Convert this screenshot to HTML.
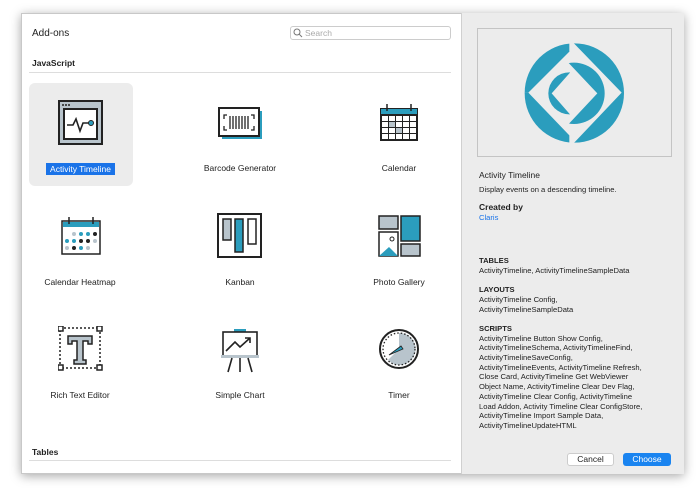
<!DOCTYPE html>
<html><head><style>
*{margin:0;padding:0;box-sizing:border-box}
body{width:697px;height:494px;background:#fff;font-family:"Liberation Sans",sans-serif;position:relative;overflow:hidden;color:#222}
.win{position:absolute;left:21px;top:13px;width:663px;height:461px;background:#fff;box-shadow:0 2px 10px rgba(0,0,0,.35);border:1px solid #c8c8c8}
.right{position:absolute;left:461px;top:13px;width:223px;height:461px;background:#ececec;border-left:1px solid #d0d0d0}
.a{position:absolute;white-space:nowrap}
.lbl{position:absolute;font-size:8.5px;width:140px;text-align:center;color:#222}
.ic{position:absolute}
.sm{font-size:7.6px;line-height:9.7px;color:#222}
</style></head><body>
<div class="win"></div>
<div class="right"></div>
<div class="a" style="left:32px;top:28px;font-size:10px;">Add-ons</div>
<div class="a" style="left:290px;top:26px;width:161px;height:14px;border:1px solid #ccc;border-radius:3px;background:#fff"></div>
<svg class="ic" style="left:293px;top:28px" width="10" height="10"><circle cx="4" cy="4" r="3" fill="none" stroke="#777" stroke-width="1"/><line x1="6" y1="6" x2="9" y2="9" stroke="#777"/></svg>
<div class="a" style="left:305px;top:28px;font-size:8.5px;color:#aaa">Search</div>
<div class="a" style="left:32px;top:58px;font-size:8.5px;font-weight:bold">JavaScript</div>
<div class="a" style="left:29px;top:72px;width:422px;height:1px;background:#ddd"></div>
<div class="a" style="left:29px;top:83px;width:104px;height:103px;background:#ececec;border-radius:6px"></div>
<div class="a" style="left:46px;top:163px;width:69px;height:12px;background:#1a73e8;color:#fff;font-size:8.5px;text-align:center;line-height:12px">Activity Timeline</div>
<div class="lbl" style="left:170px;top:163px">Barcode Generator</div>
<div class="lbl" style="left:329px;top:163px">Calendar</div>
<div class="lbl" style="left:10px;top:277px">Calendar Heatmap</div>
<div class="lbl" style="left:170px;top:277px">Kanban</div>
<div class="lbl" style="left:329px;top:277px">Photo Gallery</div>
<div class="lbl" style="left:10px;top:390px">Rich Text Editor</div>
<div class="lbl" style="left:170px;top:390px">Simple Chart</div>
<div class="lbl" style="left:329px;top:390px">Timer</div>
<div class="a" style="left:32px;top:447px;font-size:8.5px;font-weight:bold">Tables</div>
<div class="a" style="left:29px;top:460px;width:422px;height:1px;background:#ddd"></div>

<!-- icons -->
<svg class="ic" style="left:58px;top:100px" width="46" height="46"><rect x="1" y="1" width="43" height="43" fill="#b8c4cc" stroke="#222" stroke-width="2"/><rect x="6" y="9" width="33" height="30" fill="#fff" stroke="#222" stroke-width="2"/><circle cx="5" cy="5" r="1" fill="#222"/><circle cx="8" cy="5" r="1" fill="#222"/><circle cx="11" cy="5" r="1" fill="#222"/><path d="M9 25h6l3-6 4 12 3-8h6" fill="none" stroke="#222" stroke-width="1.6"/><circle cx="33" cy="23" r="2.5" fill="#2b9dbd" stroke="#222"/></svg>
<svg class="ic" style="left:218px;top:107px" width="46" height="34"><rect x="4" y="4" width="40" height="28" fill="#2b9dbd"/><rect x="1" y="1" width="40" height="28" fill="#fff" stroke="#222" stroke-width="2"/><path d="M9 8h-3v4M9 23h-3v-4M33 8h3v4M33 23h3v-4" fill="none" stroke="#222" stroke-width="1.3"/><path d="M12 9v13M15 9v13M18 9v13M21 9v13M24 9v13M27 9v13M30 9v13" stroke="#222" stroke-width="1.3"/></svg>
<svg class="ic" style="left:379px;top:102px" width="40" height="40"><rect x="1" y="6" width="38" height="33" fill="#222"/><rect x="2" y="7" width="36" height="5" fill="#2b9dbd"/><path d="M8 2v7M32 2v7" stroke="#222" stroke-width="1.5"/><g fill="#fff"><rect x="3" y="14" width="6" height="5"/><rect x="10" y="14" width="6" height="5"/><rect x="17" y="14" width="6" height="5"/><rect x="24" y="14" width="6" height="5"/><rect x="31" y="14" width="6" height="5"/><rect x="3" y="20" width="6" height="5"/><rect x="10" y="20" width="6" height="5" fill="#b8c4cc"/><rect x="17" y="20" width="6" height="5"/><rect x="24" y="20" width="6" height="5"/><rect x="31" y="20" width="6" height="5"/><rect x="3" y="26" width="6" height="5"/><rect x="10" y="26" width="6" height="5"/><rect x="17" y="26" width="6" height="5" fill="#b8c4cc"/><rect x="24" y="26" width="6" height="5"/><rect x="31" y="26" width="6" height="5"/><rect x="3" y="32" width="6" height="5"/><rect x="10" y="32" width="6" height="5"/><rect x="17" y="32" width="6" height="5"/><rect x="24" y="32" width="6" height="5"/><rect x="31" y="32" width="6" height="5"/></g></svg>
<svg class="ic" style="left:61px;top:216px" width="40" height="40"><rect x="1" y="5" width="38" height="33" fill="#fff" stroke="#222" stroke-width="1.5"/><rect x="2" y="6" width="36" height="5" fill="#2b9dbd"/><path d="M8 1v7M32 1v7" stroke="#222" stroke-width="1.5"/><g><circle cx="13" cy="18" r="2" fill="#b8c4cc"/><circle cx="20" cy="18" r="2" fill="#2b9dbd"/><circle cx="27" cy="18" r="2" fill="#2b9dbd"/><circle cx="34" cy="18" r="2" fill="#222"/><circle cx="6" cy="25" r="2" fill="#2b9dbd"/><circle cx="13" cy="25" r="2" fill="#2b9dbd"/><circle cx="20" cy="25" r="2" fill="#222"/><circle cx="27" cy="25" r="2" fill="#222"/><circle cx="34" cy="25" r="2" fill="#b8c4cc"/><circle cx="6" cy="32" r="2" fill="#b8c4cc"/><circle cx="13" cy="32" r="2" fill="#222"/><circle cx="20" cy="32" r="2" fill="#2b9dbd"/><circle cx="27" cy="32" r="2" fill="#b8c4cc"/></g></svg>
<svg class="ic" style="left:217px;top:213px" width="46" height="46"><rect x="1" y="1" width="43" height="43" fill="#fff" stroke="#222" stroke-width="2"/><rect x="6" y="6" width="8" height="21" fill="#b8c4cc" stroke="#222" stroke-width="1.5"/><rect x="18" y="6" width="8" height="33" fill="#2b9dbd" stroke="#222" stroke-width="1.5"/><rect x="31" y="6" width="8" height="25" fill="#fff" stroke="#222" stroke-width="1.5"/></svg>
<svg class="ic" style="left:378px;top:214px" width="44" height="44"><rect x="1" y="2" width="19" height="13" fill="#b8c4cc" stroke="#222" stroke-width="1.5"/><rect x="23" y="2" width="19" height="25" fill="#2b9dbd" stroke="#222" stroke-width="1.5"/><rect x="1" y="18" width="19" height="24" fill="#fff" stroke="#222" stroke-width="1.5"/><path d="M1 42l10-9 9 9z" fill="#2b9dbd"/><circle cx="14" cy="25" r="2" fill="none" stroke="#222"/><rect x="23" y="30" width="19" height="12" fill="#b8c4cc" stroke="#222" stroke-width="1.5"/></svg>
<svg class="ic" style="left:58px;top:326px" width="46" height="46"><rect x="2" y="2" width="40" height="40" fill="none" stroke="#222" stroke-width="1.5" stroke-dasharray="2 2"/><g fill="#fff" stroke="#222" stroke-width="1.5"><rect x="0" y="0" width="5" height="5"/><rect x="39" y="0" width="5" height="5"/><rect x="0" y="39" width="5" height="5"/><rect x="39" y="39" width="5" height="5"/></g><path d="M10 10h24v8h-4v-3h-5v19h3v4h-12v-4h3v-19h-5v3h-4z" fill="#b8c4cc" stroke="#222" stroke-width="1.5"/></svg>
<svg class="ic" style="left:221px;top:327px" width="38" height="46"><rect x="13" y="2" width="12" height="6" fill="#2b9dbd"/><rect x="2" y="5" width="34" height="25" fill="#fff" stroke="#222" stroke-width="1.6"/><rect x="0" y="28" width="38" height="3" fill="#b8c4cc"/><path d="M5 24l9-9 5 5 10-9M24 11h5v5" fill="none" stroke="#222" stroke-width="1.6"/><path d="M11 31l-4 14M19 31v14M27 31l4 14" stroke="#222" stroke-width="1.6"/></svg>
<svg class="ic" style="left:378px;top:328px" width="42" height="42"><circle cx="21" cy="21" r="19" fill="#fff" stroke="#222" stroke-width="2"/><path d="M21 5a16 16 0 1 1 -11 27L21 21z" fill="#b8c4cc"/><circle cx="21" cy="21" r="16" fill="none" stroke="#222" stroke-width="1.3" stroke-dasharray="1.5 2"/><path d="M11 27l12-9 2 3z" fill="#2b9dbd" stroke="#222" stroke-width=".8"/></svg>

<!-- right -->
<div class="a" style="left:477px;top:28px;width:195px;height:129px;border:1px solid #c4c4c4;background:#ececec"></div>
<svg class="ic" style="left:520px;top:36px" width="110" height="114" viewBox="0 0 330 342">
<defs>
<clipPath id="c1"><circle cx="163" cy="171" r="149"/></clipPath>
<clipPath id="c2"><circle cx="162" cy="172" r="92"/></clipPath>
<clipPath id="c3"><circle cx="148" cy="172" r="63"/></clipPath>
</defs>
<g fill="#2b9dbd">
<g clip-path="url(#c1)">
<polygon points="25,170 148,47 148,0 0,0 0,170"/>
<polygon points="25,170 148,298 148,342 0,342 0,170"/>
<polygon points="155,0 155,15 305,170 155,328 155,342 330,342 330,0"/>
</g>
<g clip-path="url(#c2)"><polygon points="145,0 145,80 232,172 145,265 145,342 330,342 330,0"/></g>
<g clip-path="url(#c3)"><polygon points="150,0 150,110 95,172 150,235 150,342 0,342 0,0"/></g>
</g>
</svg>
<div class="a" style="left:479px;top:170px;font-size:8.5px">Activity Timeline</div>
<div class="a" style="left:479px;top:185px;font-size:7.6px">Display events on a descending timeline.</div>
<div class="a" style="left:479px;top:202px;font-size:8.5px;font-weight:bold">Created by</div>
<div class="a" style="left:479px;top:213px;font-size:7.6px;color:#1a73e8">Claris</div>
<div class="a sm" style="left:479px;top:256px"><b>TABLES</b><br>ActivityTimeline, ActivityTimelineSampleData<br><br><b>LAYOUTS</b><br>ActivityTimeline Config,<br>ActivityTimelineSampleData<br><br><b>SCRIPTS</b><br>ActivityTimeline Button Show Config,<br>ActivityTimelineSchema, ActivityTimelineFind,<br>ActivityTimelineSaveConfig,<br>ActivityTimelineEvents, ActivityTimeline Refresh,<br>Close Card, ActivityTimeline Get WebViewer<br>Object Name, ActivityTimeline Clear Dev Flag,<br>ActivityTimeline Clear Config, ActivityTimeline<br>Load Addon, Activity Timeline Clear ConfigStore,<br>ActivityTimeline Import Sample Data,<br>ActivityTimelineUpdateHTML</div>
<div class="a" style="left:567px;top:453px;width:47px;height:13px;background:#fff;border:1px solid #ccc;border-radius:3px;font-size:8.5px;text-align:center;line-height:11px">Cancel</div>
<div class="a" style="left:623px;top:453px;width:48px;height:13px;background:#1a84f0;border-radius:3px;font-size:8.5px;text-align:center;line-height:13px;color:#fff">Choose</div>
</body></html>
